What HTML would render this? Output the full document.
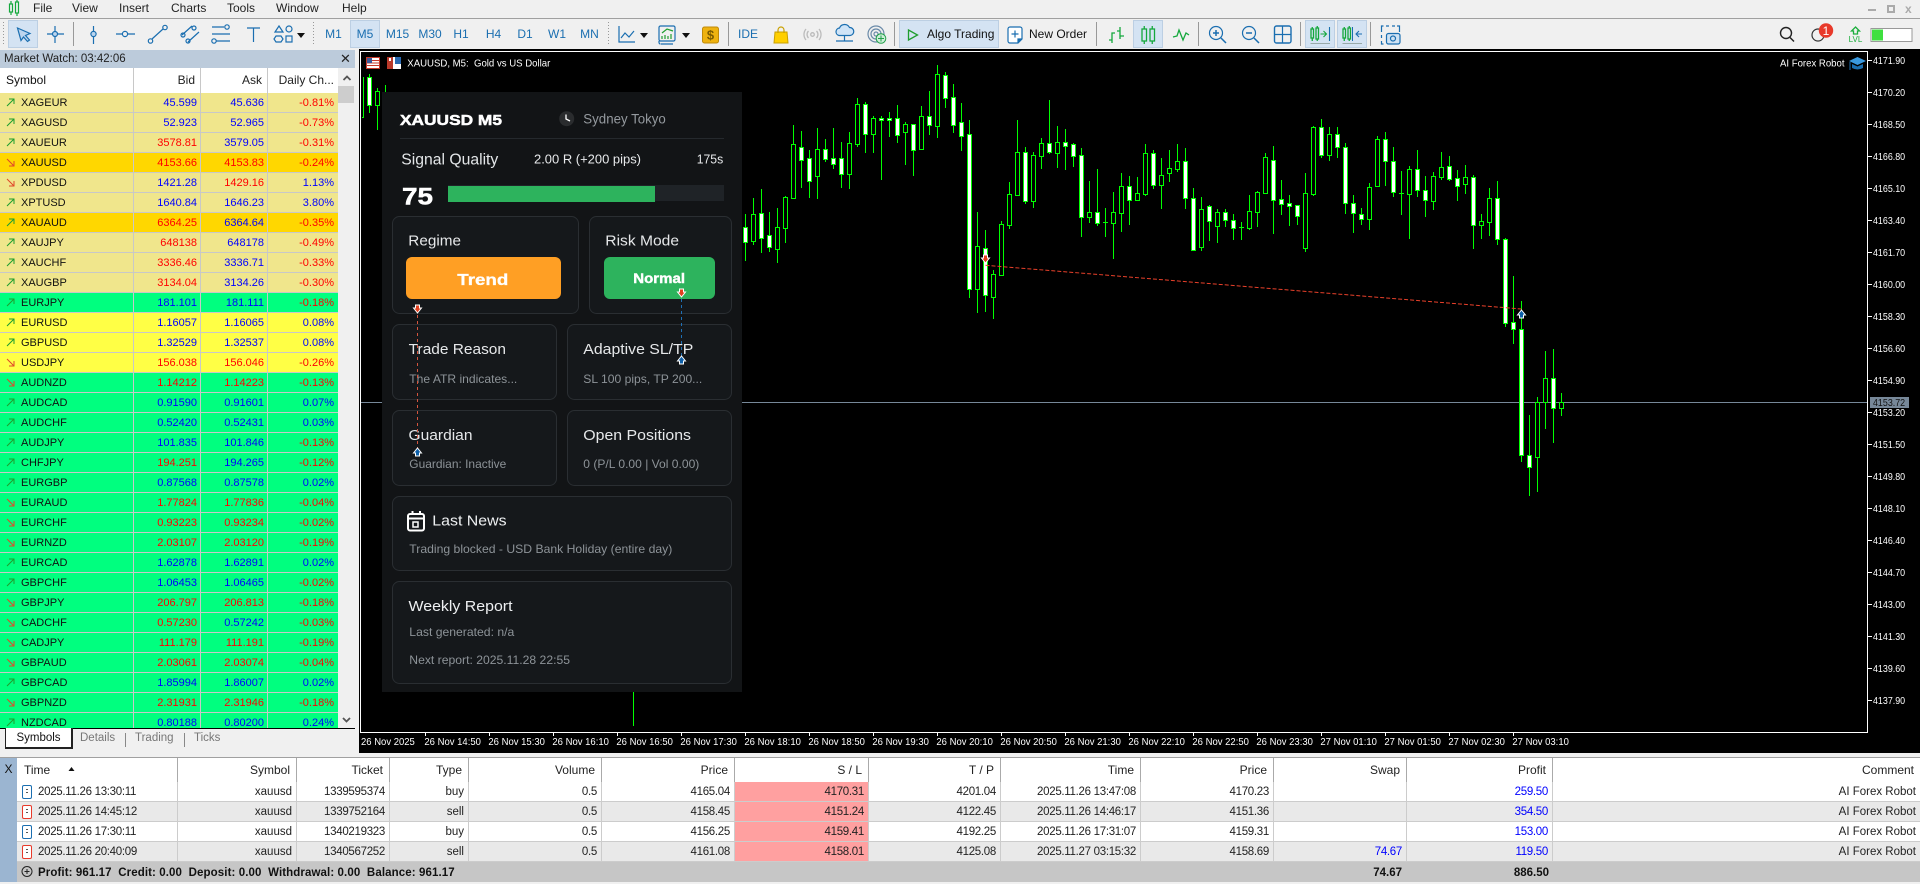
<!DOCTYPE html>
<html lang="en"><head><meta charset="utf-8"><title>MT5</title>
<style>
html,body{margin:0;padding:0;background:#f0f0f0;width:1920px;height:882px;overflow:hidden;font-family:"Liberation Sans",sans-serif;color:#222}
#main{position:absolute;left:0;top:0;z-index:3}
text{font-family:"Liberation Sans",sans-serif;white-space:pre}
.px,.tx{font-size:10px;fill:#fff;transform-box:fill-box;transform-origin:0 0}
.px{transform:scaleX(.89)}.tx{transform:scaleX(.95)}
.m{font-size:12px;fill:#222}.tf{font-size:12px;fill:#1a6eb0;text-anchor:middle}
.t1{font-size:15px;fill:#e6e8ea}.t2{font-size:12px;fill:#8d9398}
#mw{position:absolute;left:0;top:50px;width:355px;height:678px;background:#f0f0f0;overflow:hidden}
#mwt{height:18px;line-height:18px;background:#bccbdb;font-size:11.5px;padding-left:4px;position:relative}
#mwt b{position:absolute;left:340px;top:0;font-weight:normal;font-size:13px}
#mwh{display:flex;height:25px;background:#fff;width:338px;line-height:25px;font-size:12px}
#mwh div{box-sizing:border-box;border-right:1px solid #c8c8c8;text-align:right;padding-right:5px}
.r{display:flex;box-sizing:border-box;height:20px;width:338px;border-bottom:1px solid #c8c8c8;line-height:21px;font-size:11px}
.r div{box-sizing:border-box;border-right:1px solid #c8c8c8;text-align:right;padding-right:3px}
.r div.s,#mwh div.s{width:134px;text-align:left;padding-left:6px;color:#111;white-space:nowrap}
.r svg{vertical-align:-1px;margin-right:6px}
.w2{width:67px}.w4{width:70px;border-right:0!important;padding-right:4px!important}
.g{background:#f0e68c}.o{background:#ffd700}.f{background:#00ff7f}.y{background:#ffff45}
.b{color:#0000ff}.d{color:#ff0000}
#sb{position:absolute;left:338px;top:18px;width:17px;height:660px;background:#f0f0f0}
#sb i{position:absolute;left:0;top:18px;width:16px;height:17px;background:#cdcdcd}
#tabs{position:absolute;left:0;top:728px;width:355px;height:25px;border-top:1px solid #000;font-size:11.5px;box-sizing:border-box}
#tabs span{position:absolute;top:3px;color:#777}
#tabs .on{left:5px;top:-1px;width:65px;height:19px;background:#fff;border:1px solid #222;border-top:0;border-bottom-width:2px;border-right-width:2px;color:#111;line-height:20px;text-align:center;box-sizing:content-box}
#tabs u{position:absolute;top:4px;width:1px;height:14px;background:#888}
#tb{position:absolute;left:0;top:757px;width:1920px;height:125px;border-top:1px solid #a0a0a0;box-sizing:border-box;background:#fff}
#strip{position:absolute;left:0;top:0;width:17px;height:124px;background:#9bb5d1;color:#111;font-size:12px;text-align:center;line-height:22px}
.row{position:absolute;left:17px;right:0;display:flex;box-sizing:border-box;height:20px;font-size:11.5px;line-height:21px;border-bottom:1px solid #ccc}
.row div{box-sizing:border-box;border-right:1px solid #ccc;text-align:right;padding-right:4px;white-space:nowrap;overflow:hidden;letter-spacing:-.3px}
.row .a1,.row .a3,.row .a12{letter-spacing:0}
.row.h{top:0;height:24px;line-height:25px;border-bottom:0;font-size:12px}
.row.h div{border-right-color:#aaa;padding-right:6px;letter-spacing:0}
.a0{width:161px;text-align:left!important;padding-left:21px}.a1{width:119px}.a2{width:93px}.a3{width:79px}.a4{width:133px}.a5{width:133px}.a6{width:134px}.a7{width:132px}.a8{width:140px}.a9{width:133px}.a10{width:133px}.a11{width:146px}.a12{width:367px;border-right:0!important}
.alt{background:#e9e9e9}.sl{background:#ffa0a0}
.h .a0{padding-left:7px}
.i{position:absolute;left:5px;top:3px;width:8px;height:12px;border:1.5px solid #1a6eb0;border-radius:2px;background:#fff}
.i.x{border-color:#e8392a}
.i:before{content:"";position:absolute;left:3px;top:3px;width:2px;height:1px;background:#555;box-shadow:0 3px 0 #555}
#sum{position:absolute;left:17px;right:0;top:104px;height:20px;background:#c6c6c6;font-size:11.5px;font-weight:bold;line-height:22px;color:#111;white-space:nowrap}
#sum span{position:absolute}
</style></head><body>

<svg id="main" width="1920" height="882" viewBox="0 0 1920 882" style="pointer-events:none">
<defs>
<symbol id="up" viewBox="0 0 9 9"><path d="M1 8L8 1M3 1H8V6" fill="none" stroke="#1f9e2e"/></symbol>
<symbol id="dn" viewBox="0 0 9 9"><path d="M1 1L8 8M8 3V8H3" fill="none" stroke="#e0472a"/></symbol>
</defs>
<!-- top chrome -->
<rect x="0" y="18" width="1920" height="1" fill="#a0a0a0"/>
<g fill="none" stroke="#14a83c" stroke-width="1.2"><rect x="9.5" y="4" width="3" height="8"/><rect x="15.5" y="2" width="3" height="11"/><path d="M11 1V4M11 12V15M17 0V2M17 13V16"/></g>
<text class="m" x="33" y="12">File</text><text class="m" x="72" y="12">View</text><text class="m" x="119" y="12">Insert</text><text class="m" x="171" y="12">Charts</text><text class="m" x="227" y="12">Tools</text><text class="m" x="276" y="12">Window</text><text class="m" x="342" y="12">Help</text>
<g fill="#aaa"><rect x="1868" y="9" width="8" height="2"/><path d="M1887 5h8v8h-8zM1889 7v4h4v-4z" fill-rule="evenodd"/><text x="1905" y="13" font-size="12" font-weight="bold" fill="#aaa">x</text></g>
<!-- toolbar boxes -->
<g fill="#d4e3f3" stroke="#bccfe3"><rect x="8.5" y="20.5" width="29" height="27"/><rect x="350.5" y="20.5" width="29" height="27"/><rect x="899.5" y="20.5" width="99" height="27"/><rect x="1133.5" y="20.5" width="29" height="27"/><rect x="1305.5" y="20.5" width="29" height="27"/><rect x="1337.5" y="20.5" width="29" height="27"/></g>
<g stroke="#999" fill="none"><path d="M73.5 22V46M728.5 22V46M894.5 22V46M1096.5 22V46M1198.5 22V46M1300.5 22V46M1370.5 22V46"/><path d="M3.5 22V46M313.5 22V46M608.5 22V46" stroke-dasharray="1 2"/></g>
<!-- drawing tools -->
<g fill="none" stroke="#1a6eb0" stroke-width="1.2">
<path d="M17.5 28L30 33.5L25.5 35.5L29.5 40L27.5 41.5L23.5 37L21 40.5Z" fill="#bcd5ee"/>
<path d="M47 34H52.5M57.5 34H64M55 26V31.5M55 36.5V43"/><circle cx="55" cy="34" r="2.5" fill="#bcd5ee"/>
<path d="M93.5 26V31M93.5 37V44"/><circle cx="93.5" cy="34" r="2.6" fill="#bcd5ee"/>
<path d="M116 34H122.5M127.5 34H135"/><circle cx="125" cy="34" r="2.6"/>
<path d="M152 39L163 29"/><circle cx="150.5" cy="41" r="2.2"/><circle cx="165" cy="27.5" r="2.2"/>
<path d="M182 35L192 26M188 42L199 32"/><circle cx="183" cy="35" r="2"/><circle cx="194" cy="28" r="2"/><circle cx="188" cy="41" r="2"/>
<path d="M212 27H224M212 34H230M216 41H230"/><circle cx="227" cy="27" r="2.2"/><circle cx="214" cy="41" r="2.2"/>
<path d="M247 28H260M253.5 28V42"/>
<path d="M279 26L283 32H275Z"/><circle cx="289" cy="29" r="3"/><path d="M276 37h5l2 3l-2 3h-5l-2-3z" transform="translate(0 -1)"/><rect x="286" y="36" width="6" height="6"/>
</g>
<path d="M297 33h8l-4 5zM640 33h8l-4 5zM682 33h8l-4 5z" fill="#111"/>
<g class="tfg"><text class="tf" x="333.5" y="38">M1</text><text class="tf" x="365" y="38">M5</text><text class="tf" x="397.5" y="38">M15</text><text class="tf" x="430" y="38">M30</text><text class="tf" x="461" y="38">H1</text><text class="tf" x="493.5" y="38">H4</text><text class="tf" x="525" y="38">D1</text><text class="tf" x="557" y="38">W1</text><text class="tf" x="589.5" y="38">MN</text><text class="tf" x="748" y="38">IDE</text></g>
<g fill="none" stroke="#1a6eb0" stroke-width="1.2">
<path d="M619 26V42H635"/><path d="M621 38L625 33L629 37L634 31"/>
<rect x="659" y="26" width="16" height="15" rx="1.5"/><path d="M661 44H673M659 41V42.5A1.5 1.5 0 0 0 660.5 44"/><path d="M662 33L667 29L673 31" stroke="#1f9e2e"/><path d="M662 39V36M665 39V35M668 39V36M671 39V34" stroke="#1f9e2e"/>
<path d="M839 35.500a3.800 3.800 0 0 1 .5-7.500a5.500 5.500 0 0 1 10-.5a4 4 0 0 1 .5 8z" fill="#cfe4f7"/><path d="M844.500 35.500V40.500M836 41H853"/>
<circle cx="876" cy="34" r="8" stroke="#6a8aa8"/><circle cx="876" cy="34" r="5" stroke="#6a8aa8"/><circle cx="876" cy="34" r="2" stroke="#6a8aa8"/>
<path d="M1010 27h10a2 2 0 0 1 2 2v10l-4 4h-8a2 2 0 0 1-2-2v-12a2 2 0 0 1 2-2z" fill="#fff"/><path d="M1011.500 34h7M1015 30.500v7"/><path d="M1018 43v-4h4" fill="#1a6eb0"/>
<circle cx="1216" cy="33" r="6.500"/><path d="M1213 33h6M1216 30v6M1221 38L1226 43" stroke-width="1.500"/>
<circle cx="1249" cy="33" r="6.500"/><path d="M1246 33h6M1254 38L1259 43" stroke-width="1.500"/>
<rect x="1274.500" y="26" width="16.500" height="17" rx="2" stroke-width="1.400"/><path d="M1274.500 34.500H1291M1282.500 26V43"/>
<path d="M1381.500 32V26h2M1386 26h3M1392 26h3M1397 26h2.500v6M1381.500 35v3M1381.500 41v3h2" stroke-dasharray="none"/><rect x="1386.500" y="33.500" width="13.500" height="10.500" rx="2" fill="#cfe2f3"/><circle cx="1393" cy="38.500" r="2.500"/>
</g>
<rect x="702.500" y="27" width="16" height="16" rx="2" fill="#eeb20f" stroke="#c08a08"/><text x="710.500" y="39.500" text-anchor="middle" font-size="13" font-weight="bold" fill="#7a5a00">$</text>
<path d="M775 32H787L788 43H774Z" fill="#ffcf00" stroke="#c9a000"/><path d="M778 33V30a3 3 0 0 1 6 0V33" fill="none" stroke="#c9a000" stroke-width="1.200"/>
<g fill="none" stroke="#bbb" stroke-width="1.300"><circle cx="812.500" cy="34.500" r="1.800"/><path d="M808.500 31a5 5 0 0 0 0 7M816.500 31a5 5 0 0 1 0 7M806 29a8.500 8.500 0 0 0 0 11M819 29a8.500 8.500 0 0 1 0 11"/></g>
<circle cx="881" cy="38.500" r="4.800" fill="#cdeed8" stroke="#22a04a"/><path d="M878 38.500h6M881 35.500v6" stroke="#22a04a"/>
<path d="M908.500 30V40L917.500 35Z" fill="none" stroke="#1f9e2e" stroke-width="1.300"/>
<text x="927" y="38" font-size="12" fill="#111">Algo Trading</text>
<text x="1029" y="38" font-size="12" fill="#111">New Order</text>
<g fill="none" stroke="#14a83c" stroke-width="1.300">
<path d="M1112 43V33H1115M1112 40H1109M1120 27V39M1120 36H1124M1120 31H1117"/>
<rect x="1142" y="29" width="4.500" height="12"/><rect x="1150" y="29" width="4.500" height="12"/><path d="M1144.250 26V29M1144.250 41V44M1152.250 26V29M1152.250 41V44"/>
<path d="M1173 37L1177 36L1179 30L1183 40L1186 33L1189 35"/>
<rect x="1311" y="29" width="2.500" height="9"/><rect x="1316" y="28" width="2.500" height="11"/><path d="M1312.250 27V29M1312.250 38V41M1317.250 26V28M1317.250 39V41"/>
<rect x="1343" y="29" width="2.500" height="9"/><rect x="1348" y="28" width="2.500" height="11"/><path d="M1344.250 27V29M1344.250 38V41M1349.250 26V28M1349.250 39V41"/>
</g>
<path d="M1320.500 34H1326M1323.500 31L1326.500 34L1323.500 37M1329.500 27V41" fill="none" stroke="#14a83c" stroke-width="1.100"/><path d="M1329.500 27V41" stroke="#1a6eb0"/>
<path d="M1352.500 27V41" stroke="#1a6eb0"/><path d="M1362 34H1356M1359 31L1356 34L1359 37" fill="none" stroke="#1a6eb0" stroke-width="1.100"/>
<path d="M1310.500 43.500H1330M1342.500 43.500H1362" stroke="#9aa" stroke-width="1"/>
<!-- right icons -->
<circle cx="1786" cy="33" r="5.500" fill="none" stroke="#222" stroke-width="1.400"/><path d="M1790 37.500L1794 41.500" stroke="#222" stroke-width="1.500"/>
<circle cx="1818" cy="35" r="6" fill="none" stroke="#333" stroke-width="1.200"/><circle cx="1826" cy="30.500" r="7.200" fill="#e8392a"/><text x="1826" y="35" text-anchor="middle" font-size="12" fill="#fff">1</text>
<path d="M1855.500 27L1859.500 31H1857.500V34H1853.500V31H1851.500Z" fill="none" stroke="#1cae3c" stroke-width="1.300"/><text x="1855.500" y="42" text-anchor="middle" font-size="8" fill="#1cae3c">LVL</text>
<rect x="1871" y="28.500" width="41" height="13" fill="#fff" stroke="#999"/><rect x="1872" y="29.500" width="11" height="11" fill="#3fe03f"/>

<!-- chart -->
<rect x="359" y="49" width="1561" height="704" fill="#000"/>
<rect x="360.500" y="51.500" width="1507" height="681" fill="#000" stroke="#fff"/>
<path d="M361 402.500H1867" stroke="#778899"/>
<g stroke="#00ff00" fill="none" shape-rendering="crispEdges">
<path d="M362 117.500h1.500V77M369.500 74V113M377.500 88V130M385.500 85V92M633.500 692V726M745.500 214V261M753.500 198V245M761.500 189V253M769.500 212V252M777.500 208V263M785.500 196V243M793.500 125V198M801.500 131V188M809.500 150V198M817.500 128V199M825.500 139V162M833.500 128V169M841.500 142V188M849.500 132V189M857.500 98V147M865.500 102V153M873.500 116V153M881.500 116V180M889.500 112V137M897.500 105V143M905.500 122V165M913.500 124V176M921.500 106V150M929.500 91V135M937.500 65V138M945.500 72V108M953.500 84V133M961.500 103V151M969.500 120V298M977.500 212V313M985.500 230V312M993.500 270V319M1001.500 221V275M1009.500 182V229M1017.500 120V195M1025.500 147V204M1033.500 152V208M1041.500 138V169M1049.500 100V154M1057.500 126V168M1065.500 129V170M1073.500 143V167M1081.500 148V237M1089.500 181V223M1097.500 169V226M1105.500 208V237M1113.500 192V259M1121.500 173V232M1129.500 176V225M1137.500 177V201M1145.500 144V196M1153.500 150V189M1161.500 158V209M1169.500 150V182M1177.500 144V172M1185.500 148V209M1193.500 188V250M1201.500 197V251M1209.500 205V241M1217.500 209V243M1225.500 209V227M1233.500 214V240M1241.500 222V240M1249.500 195V230M1257.500 191V227M1265.500 153V193M1273.500 146V234M1281.500 180V215M1289.500 195V226M1297.500 205V225M1305.500 173V252M1313.500 126V196M1321.500 119V158M1329.500 127V161M1337.500 127V158M1345.500 143V214M1353.500 195V233M1361.500 208V225M1369.500 183V230M1377.500 136V187M1385.500 132V186M1393.500 147V197M1401.500 171V215M1409.500 166V239M1417.500 150V197M1425.500 176V217M1433.500 172V210M1441.500 152V180M1449.500 156V181M1457.500 170V201M1465.500 165V194M1473.500 175V249M1481.500 214V239M1489.500 188V236M1497.500 181V245M1505.500 238V327M1513.500 276V344M1521.500 301V462M1529.500 415V496M1537.500 397V492M1545.500 351V429M1553.500 349V443M1561.500 393V416M1103 222.500h5M1239 227.500h5M1399 193.500h5"/>
<path fill="#000" d="M375.500 91.500h4v14h-4zM751.500 214.500h4v27h-4zM775.500 227.500h4v22h-4zM783.500 197.500h4v31h-4zM791.500 144.500h4v54h-4zM815.500 149.500h4v27h-4zM847.500 143.500h4v31h-4zM855.500 104.500h4v40h-4zM871.500 118.500h4v16h-4zM903.500 124.500h4v8h-4zM919.500 116.500h4v33h-4zM935.500 74.500h4v52h-4zM975.500 246.500h4v43h-4zM991.500 274.500h4v23h-4zM999.500 224.500h4v51h-4zM1007.500 194.500h4v31h-4zM1015.500 152.500h4v43h-4zM1031.500 155.500h4v46h-4zM1039.500 143.500h4v13h-4zM1055.500 142.500h4v11h-4zM1087.500 212.500h4v5h-4zM1111.500 212.500h4v11h-4zM1119.500 186.500h4v27h-4zM1135.500 193.500h4v7h-4zM1143.500 153.500h4v41h-4zM1159.500 175.500h4v10h-4zM1167.500 168.500h4v5h-4zM1175.500 161.500h4v8h-4zM1199.500 209.500h4v38h-4zM1215.500 212.500h4v14h-4zM1247.500 211.500h4v17h-4zM1255.500 192.500h4v20h-4zM1263.500 157.500h4v36h-4zM1303.500 193.500h4v55h-4zM1311.500 127.500h4v67h-4zM1327.500 134.500h4v21h-4zM1367.500 187.500h4v32h-4zM1375.500 139.500h4v47h-4zM1407.500 169.500h4v25h-4zM1431.500 176.500h4v25h-4zM1439.500 167.500h4v10h-4zM1463.500 177.500h4v7h-4zM1479.500 221.500h4v4h-4zM1487.500 198.500h4v24h-4zM1535.500 402.500h4v55h-4zM1543.500 378.500h4v24h-4zM1559.500 402.500h4v6h-4z"/>
<path fill="#fff" d="M367.500 77.500h4v28h-4zM743.500 227.500h4v15h-4zM759.500 213.500h4v25h-4zM767.500 235.500h4v12h-4zM799.500 147.500h4v13h-4zM807.500 158.500h4v23h-4zM823.500 149.500h4v10h-4zM831.500 158.500h4v6h-4zM839.500 158.500h4v16h-4zM863.500 104.500h4v30h-4zM879.500 118.500h4v2h-4zM887.500 118.500h4v2h-4zM895.500 118.500h4v17h-4zM911.500 124.500h4v26h-4zM927.500 116.500h4v9h-4zM943.500 75.500h4v23h-4zM951.500 97.500h4v28h-4zM959.500 122.500h4v14h-4zM967.500 134.500h4v155h-4zM983.500 248.500h4v47h-4zM1023.500 152.500h4v49h-4zM1047.500 143.500h4v9h-4zM1063.500 142.500h4v4h-4zM1071.500 144.500h4v12h-4zM1079.500 155.500h4v62h-4zM1095.500 212.500h4v11h-4zM1127.500 186.500h4v14h-4zM1151.500 153.500h4v32h-4zM1183.500 161.500h4v37h-4zM1191.500 198.500h4v52h-4zM1207.500 206.500h4v15h-4zM1223.500 212.500h4v8h-4zM1231.500 220.500h4v8h-4zM1271.500 160.500h4v40h-4zM1279.500 199.500h4v5h-4zM1287.500 203.500h4v3h-4zM1295.500 205.500h4v11h-4zM1319.500 127.500h4v28h-4zM1335.500 134.500h4v13h-4zM1343.500 147.500h4v56h-4zM1351.500 203.500h4v10h-4zM1359.500 214.500h4v5h-4zM1383.500 139.500h4v22h-4zM1391.500 161.500h4v31h-4zM1415.500 169.500h4v21h-4zM1423.500 190.500h4v10h-4zM1447.500 166.500h4v13h-4zM1455.500 178.500h4v8h-4zM1471.500 177.500h4v48h-4zM1495.500 198.500h4v41h-4zM1503.500 239.500h4v84h-4zM1511.500 322.500h4v7h-4zM1519.500 329.500h4v126h-4zM1527.500 455.500h4v12h-4zM1551.500 378.500h4v30h-4z"/>
</g>
<!-- chart trend line -->
<path d="M985.500 265.300L1521.500 309" stroke="#e8402a" stroke-dasharray="4 2"/>
<!-- price axis -->
<g fill="#fff"><path d="M1868 60.500h4M1868 92.500h4M1868 124.500h4M1868 156.500h4M1868 188.500h4M1868 220.500h4M1868 252.500h4M1868 284.500h4M1868 316.500h4M1868 348.500h4M1868 380.500h4M1868 412.500h4M1868 444.500h4M1868 476.500h4M1868 508.500h4M1868 540.500h4M1868 572.500h4M1868 604.500h4M1868 636.500h4M1868 668.500h4M1868 700.500h4" stroke="#fff"/>
<text class="px" x="1873" y="64">4171.90</text><text class="px" x="1873" y="96">4170.20</text><text class="px" x="1873" y="128">4168.50</text><text class="px" x="1873" y="160">4166.80</text><text class="px" x="1873" y="192">4165.10</text><text class="px" x="1873" y="224">4163.40</text><text class="px" x="1873" y="256">4161.70</text><text class="px" x="1873" y="288">4160.00</text><text class="px" x="1873" y="320">4158.30</text><text class="px" x="1873" y="352">4156.60</text><text class="px" x="1873" y="384">4154.90</text><text class="px" x="1873" y="416">4153.20</text><text class="px" x="1873" y="448">4151.50</text><text class="px" x="1873" y="480">4149.80</text><text class="px" x="1873" y="512">4148.10</text><text class="px" x="1873" y="544">4146.40</text><text class="px" x="1873" y="576">4144.70</text><text class="px" x="1873" y="608">4143.00</text><text class="px" x="1873" y="640">4141.30</text><text class="px" x="1873" y="672">4139.60</text><text class="px" x="1873" y="704">4137.90</text></g>
<rect x="1870" y="397" width="39" height="11" fill="#778899"/><text class="px" x="1873" y="406" style="fill:#111">4153.72</text>
<!-- time axis -->
<path d="M425.500 732v4M489.500 732v4M553.500 732v4M617.500 732v4M681.500 732v4M745.500 732v4M809.500 732v4M873.500 732v4M937.500 732v4M1001.500 732v4M1065.500 732v4M1129.500 732v4M1193.500 732v4M1257.500 732v4M1321.500 732v4M1385.500 732v4M1449.500 732v4M1513.500 732v4" stroke="#fff"/>
<text class="tx" x="361" y="745">26 Nov 2025</text><text class="tx" x="424.400" y="745">26 Nov 14:50</text><text class="tx" x="488.400" y="745">26 Nov 15:30</text><text class="tx" x="552.400" y="745">26 Nov 16:10</text><text class="tx" x="616.400" y="745">26 Nov 16:50</text><text class="tx" x="680.400" y="745">26 Nov 17:30</text><text class="tx" x="744.400" y="745">26 Nov 18:10</text><text class="tx" x="808.400" y="745">26 Nov 18:50</text><text class="tx" x="872.400" y="745">26 Nov 19:30</text><text class="tx" x="936.400" y="745">26 Nov 20:10</text><text class="tx" x="1000.400" y="745">26 Nov 20:50</text><text class="tx" x="1064.400" y="745">26 Nov 21:30</text><text class="tx" x="1128.400" y="745">26 Nov 22:10</text><text class="tx" x="1192.400" y="745">26 Nov 22:50</text><text class="tx" x="1256.400" y="745">26 Nov 23:30</text><text class="tx" x="1320.400" y="745">27 Nov 01:10</text><text class="tx" x="1384.400" y="745">27 Nov 01:50</text><text class="tx" x="1448.400" y="745">27 Nov 02:30</text><text class="tx" x="1512.400" y="745">27 Nov 03:10</text>
<!-- chart labels -->
<g><rect x="366.500" y="57.500" width="13" height="11" fill="#fff" stroke="#c8392a"/><path d="M367 60.500h12M367 63h12M367 65.500h12" stroke="#c8392a"/><rect x="367" y="58" width="5" height="5" fill="#3a5a9a"/>
<rect x="387" y="57" width="14" height="12" fill="#fff"/><path d="M387 57h6v12h-6z" fill="#b8392a"/><path d="M395 57h6v7h-6z" fill="#2a6ab0"/><rect x="389" y="58" width="2" height="3" fill="#fff"/></g>
<text x="407.300" y="66.500" font-size="10.500" fill="#fff" textLength="143" lengthAdjust="spacingAndGlyphs">XAUUSD, M5:  Gold vs US Dollar</text>
<text x="1780" y="66.500" font-size="10.500" fill="#fff" textLength="64.500" lengthAdjust="spacingAndGlyphs">AI Forex Robot</text>
<path d="M1849 61L1857.500 57L1866 61L1857.500 65Z" fill="#3a9ae0"/><path d="M1852 64V68Q1857.500 71 1863 68V64L1857.500 66.500Z" fill="#1a6eb0"/><path d="M1850 62V70" stroke="#1a6eb0"/>

<!-- dashboard panel -->
<rect x="382" y="92" width="360" height="600" fill="#121416"/>
<g fill="#15181b" stroke="#2a2e32">
<rect x="392.500" y="216.500" width="186" height="97" rx="7"/><rect x="589.500" y="216.500" width="142" height="97" rx="7"/>
<rect x="392.500" y="324.500" width="164" height="75" rx="7"/><rect x="567.500" y="324.500" width="164" height="75" rx="7"/>
<rect x="392.500" y="410.500" width="164" height="75" rx="7"/><rect x="567.500" y="410.500" width="164" height="75" rx="7"/>
<rect x="392.500" y="496.500" width="339" height="74" rx="7"/><rect x="392.500" y="581.500" width="339" height="102" rx="7"/>
</g>
<path d="M400 138.500H724" stroke="#25292d"/>
<text x="400" y="125" font-size="15" font-weight="bold" fill="#fff" stroke="#fff" stroke-width=".5" textLength="102" lengthAdjust="spacingAndGlyphs">XAUUSD M5</text>
<circle cx="566.700" cy="118.700" r="7.500" fill="#2a2c2e"/><path d="M566 114.500V119L570 121" fill="none" stroke="#fff" stroke-width="1.300"/>
<text x="583.300" y="123.500" font-size="14" fill="#94999e" textLength="82.500" lengthAdjust="spacingAndGlyphs">Sydney Tokyo</text>
<text x="401.300" y="164.500" font-size="15.500" fill="#e3e6e8" textLength="97" lengthAdjust="spacingAndGlyphs">Signal Quality</text>
<text x="534" y="163.500" font-size="13" fill="#e8eaec" textLength="107" lengthAdjust="spacingAndGlyphs">2.00 R (+200 pips)</text>
<text x="696.700" y="163.500" font-size="13" fill="#e8eaec" textLength="26.500" lengthAdjust="spacingAndGlyphs">175s</text>
<text x="402" y="204.500" font-size="24" font-weight="bold" fill="#fff" stroke="#fff" stroke-width=".5" textLength="31" lengthAdjust="spacingAndGlyphs">75</text>
<rect x="448" y="185" width="276" height="16" fill="#1f2327"/><rect x="448" y="186" width="207" height="16" fill="#2db35d"/>
<text class="t1" x="408.300" y="245.500" textLength="52.700" lengthAdjust="spacingAndGlyphs">Regime</text>
<text class="t1" x="605.300" y="245.500" textLength="73.700" lengthAdjust="spacingAndGlyphs">Risk Mode</text>
<rect x="406" y="257" width="155" height="42" rx="6" fill="#ff9f24"/><rect x="604" y="257" width="111" height="42" rx="6" fill="#2db35d"/>
<text x="457.300" y="285" font-size="16" font-weight="bold" fill="#fff" stroke="#fff" stroke-width=".3" textLength="51" lengthAdjust="spacingAndGlyphs">Trend</text>
<text x="633.300" y="283" font-size="13.500" font-weight="bold" fill="#fff" stroke="#fff" stroke-width=".4" textLength="51.700" lengthAdjust="spacingAndGlyphs">Normal</text>
<text class="t1" x="408.700" y="354" textLength="97.300" lengthAdjust="spacingAndGlyphs">Trade Reason</text>
<text class="t1" x="583.300" y="354" textLength="110" lengthAdjust="spacingAndGlyphs">Adaptive SL/TP</text>
<text class="t2" x="409.300" y="383" textLength="108" lengthAdjust="spacingAndGlyphs">The ATR indicates...</text>
<text class="t2" x="583.300" y="383" textLength="119" lengthAdjust="spacingAndGlyphs">SL 100 pips, TP 200...</text>
<text class="t1" x="408.500" y="440" textLength="64" lengthAdjust="spacingAndGlyphs">Guardian</text>
<text class="t1" x="583.300" y="440" textLength="107.700" lengthAdjust="spacingAndGlyphs">Open Positions</text>
<text class="t2" x="409.300" y="468" textLength="97" lengthAdjust="spacingAndGlyphs">Guardian: Inactive</text>
<text class="t2" x="583.300" y="468" textLength="116" lengthAdjust="spacingAndGlyphs">0 (P/L 0.00 | Vol 0.00)</text>
<g fill="none" stroke="#fff"><rect x="408" y="514" width="16" height="16.500" rx="2" stroke-width="2"/><path d="M408 518.500H424" stroke-width="2"/><path d="M412.500 511V514M420 511V514" stroke-width="2"/><rect x="413" y="522" width="5" height="5" stroke-width="1.500"/></g>
<text class="t1" x="432.300" y="525.700" style="fill:#eef0f2" textLength="74.300" lengthAdjust="spacingAndGlyphs">Last News</text>
<text class="t2" x="409.300" y="553" textLength="263" lengthAdjust="spacingAndGlyphs">Trading blocked - USD Bank Holiday (entire day)</text>
<text class="t1" x="408.500" y="611" style="fill:#eef0f2" textLength="104" lengthAdjust="spacingAndGlyphs">Weekly Report</text>
<text class="t2" x="409.300" y="636" textLength="105" lengthAdjust="spacingAndGlyphs">Last generated: n/a</text>
<text class="t2" x="409.300" y="664" textLength="160.700" lengthAdjust="spacingAndGlyphs">Next report: 2025.11.28 22:55</text>
<!-- trade arrows above panel -->
<path d="M417.500 309V452" stroke="#d4553f" stroke-dasharray="3 3"/>
<path d="M681.500 293V360" stroke="#1e6fb5" stroke-dasharray="3 3"/>
<g stroke="#fff" stroke-width="1"><path d="M413.500 308H415.500V305H419.500V308H421.500L417.500 313Z" fill="#e2401f"/><path d="M677.500 292H679.500V289H683.500V292H685.500L681.500 297Z" fill="#e2401f"/><path d="M981.500 258H983.500V255H987.500V258H989.500L985.500 263Z" fill="#e2401f"/>
<path d="M413.500 453H415.500V456H419.500V453H421.500L417.500 448Z" fill="#0d5fa8"/><path d="M677.500 361H679.500V364H683.500V361H685.500L681.500 356Z" fill="#0d5fa8"/><path d="M1517.500 315H1519.500V318H1523.500V315H1525.500L1521.500 310Z" fill="#0d5fa8"/></g>
<!-- scrollbar arrows -->
<path d="M343.500 80L347 76.500L350.500 80M343 718L346.500 721.500L350 718" fill="none" stroke="#555" stroke-width="1.800"/>
<circle cx="27" cy="871.500" r="5" fill="none" stroke="#222"/><path d="M24.500 871.500h5M27 869v5" stroke="#222"/>
<path d="M68.500 771L71.500 767L74.500 771Z" fill="#111"/>
</svg>

<!-- Market Watch -->
<div id="mw">
<div id="mwt">Market Watch: 03:42:06<b>✕</b></div>
<div id="mwh"><div class="s">Symbol</div><div class="w2">Bid</div><div class="w2">Ask</div><div class="w4">Daily Ch...</div></div>
<div class="r g"><div class="s"><svg width="9" height="9"><use href="#up"/></svg>XAGEUR</div><div class="w2 b">45.599</div><div class="w2 b">45.636</div><div class="w4 d">-0.81%</div></div>
<div class="r g"><div class="s"><svg width="9" height="9"><use href="#up"/></svg>XAGUSD</div><div class="w2 b">52.923</div><div class="w2 b">52.965</div><div class="w4 d">-0.73%</div></div>
<div class="r g"><div class="s"><svg width="9" height="9"><use href="#up"/></svg>XAUEUR</div><div class="w2 d">3578.81</div><div class="w2 b">3579.05</div><div class="w4 d">-0.31%</div></div>
<div class="r o"><div class="s"><svg width="9" height="9"><use href="#dn"/></svg>XAUUSD</div><div class="w2 d">4153.66</div><div class="w2 d">4153.83</div><div class="w4 d">-0.24%</div></div>
<div class="r g"><div class="s"><svg width="9" height="9"><use href="#dn"/></svg>XPDUSD</div><div class="w2 b">1421.28</div><div class="w2 d">1429.16</div><div class="w4 b">1.13%</div></div>
<div class="r g"><div class="s"><svg width="9" height="9"><use href="#up"/></svg>XPTUSD</div><div class="w2 b">1640.84</div><div class="w2 b">1646.23</div><div class="w4 b">3.80%</div></div>
<div class="r o"><div class="s"><svg width="9" height="9"><use href="#up"/></svg>XAUAUD</div><div class="w2 d">6364.25</div><div class="w2 b">6364.64</div><div class="w4 d">-0.35%</div></div>
<div class="r g"><div class="s"><svg width="9" height="9"><use href="#up"/></svg>XAUJPY</div><div class="w2 d">648138</div><div class="w2 b">648178</div><div class="w4 d">-0.49%</div></div>
<div class="r g"><div class="s"><svg width="9" height="9"><use href="#up"/></svg>XAUCHF</div><div class="w2 d">3336.46</div><div class="w2 b">3336.71</div><div class="w4 d">-0.33%</div></div>
<div class="r g"><div class="s"><svg width="9" height="9"><use href="#up"/></svg>XAUGBP</div><div class="w2 d">3134.04</div><div class="w2 b">3134.26</div><div class="w4 d">-0.30%</div></div>
<div class="r f"><div class="s"><svg width="9" height="9"><use href="#up"/></svg>EURJPY</div><div class="w2 b">181.101</div><div class="w2 b">181.111</div><div class="w4 d">-0.18%</div></div>
<div class="r y"><div class="s"><svg width="9" height="9"><use href="#up"/></svg>EURUSD</div><div class="w2 b">1.16057</div><div class="w2 b">1.16065</div><div class="w4 b">0.08%</div></div>
<div class="r y"><div class="s"><svg width="9" height="9"><use href="#up"/></svg>GBPUSD</div><div class="w2 b">1.32529</div><div class="w2 b">1.32537</div><div class="w4 b">0.08%</div></div>
<div class="r y"><div class="s"><svg width="9" height="9"><use href="#dn"/></svg>USDJPY</div><div class="w2 d">156.038</div><div class="w2 d">156.046</div><div class="w4 d">-0.26%</div></div>
<div class="r f"><div class="s"><svg width="9" height="9"><use href="#dn"/></svg>AUDNZD</div><div class="w2 d">1.14212</div><div class="w2 d">1.14223</div><div class="w4 d">-0.13%</div></div>
<div class="r f"><div class="s"><svg width="9" height="9"><use href="#up"/></svg>AUDCAD</div><div class="w2 b">0.91590</div><div class="w2 b">0.91601</div><div class="w4 b">0.07%</div></div>
<div class="r f"><div class="s"><svg width="9" height="9"><use href="#up"/></svg>AUDCHF</div><div class="w2 b">0.52420</div><div class="w2 b">0.52431</div><div class="w4 b">0.03%</div></div>
<div class="r f"><div class="s"><svg width="9" height="9"><use href="#up"/></svg>AUDJPY</div><div class="w2 b">101.835</div><div class="w2 b">101.846</div><div class="w4 d">-0.13%</div></div>
<div class="r f"><div class="s"><svg width="9" height="9"><use href="#up"/></svg>CHFJPY</div><div class="w2 d">194.251</div><div class="w2 b">194.265</div><div class="w4 d">-0.12%</div></div>
<div class="r f"><div class="s"><svg width="9" height="9"><use href="#up"/></svg>EURGBP</div><div class="w2 b">0.87568</div><div class="w2 b">0.87578</div><div class="w4 b">0.02%</div></div>
<div class="r f"><div class="s"><svg width="9" height="9"><use href="#dn"/></svg>EURAUD</div><div class="w2 d">1.77824</div><div class="w2 d">1.77836</div><div class="w4 d">-0.04%</div></div>
<div class="r f"><div class="s"><svg width="9" height="9"><use href="#dn"/></svg>EURCHF</div><div class="w2 d">0.93223</div><div class="w2 d">0.93234</div><div class="w4 d">-0.02%</div></div>
<div class="r f"><div class="s"><svg width="9" height="9"><use href="#dn"/></svg>EURNZD</div><div class="w2 d">2.03107</div><div class="w2 d">2.03120</div><div class="w4 d">-0.19%</div></div>
<div class="r f"><div class="s"><svg width="9" height="9"><use href="#up"/></svg>EURCAD</div><div class="w2 b">1.62878</div><div class="w2 b">1.62891</div><div class="w4 b">0.02%</div></div>
<div class="r f"><div class="s"><svg width="9" height="9"><use href="#up"/></svg>GBPCHF</div><div class="w2 b">1.06453</div><div class="w2 b">1.06465</div><div class="w4 d">-0.02%</div></div>
<div class="r f"><div class="s"><svg width="9" height="9"><use href="#dn"/></svg>GBPJPY</div><div class="w2 d">206.797</div><div class="w2 d">206.813</div><div class="w4 d">-0.18%</div></div>
<div class="r f"><div class="s"><svg width="9" height="9"><use href="#dn"/></svg>CADCHF</div><div class="w2 d">0.57230</div><div class="w2 b">0.57242</div><div class="w4 d">-0.03%</div></div>
<div class="r f"><div class="s"><svg width="9" height="9"><use href="#dn"/></svg>CADJPY</div><div class="w2 d">111.179</div><div class="w2 d">111.191</div><div class="w4 d">-0.19%</div></div>
<div class="r f"><div class="s"><svg width="9" height="9"><use href="#dn"/></svg>GBPAUD</div><div class="w2 d">2.03061</div><div class="w2 d">2.03074</div><div class="w4 d">-0.04%</div></div>
<div class="r f"><div class="s"><svg width="9" height="9"><use href="#up"/></svg>GBPCAD</div><div class="w2 b">1.85994</div><div class="w2 b">1.86007</div><div class="w4 b">0.02%</div></div>
<div class="r f"><div class="s"><svg width="9" height="9"><use href="#dn"/></svg>GBPNZD</div><div class="w2 d">2.31931</div><div class="w2 d">2.31946</div><div class="w4 d">-0.18%</div></div>
<div class="r f"><div class="s"><svg width="9" height="9"><use href="#up"/></svg>NZDCAD</div><div class="w2 b">0.80188</div><div class="w2 b">0.80200</div><div class="w4 b">0.24%</div></div>
<div id="sb"><i></i></div>
</div>
<div id="tabs"><span class="on">Symbols</span><span style="left:80px">Details</span><u style="left:125px"></u><span style="left:135px">Trading</span><u style="left:184px"></u><span style="left:194px">Ticks</span></div>

<!-- Toolbox -->
<div id="tb">
<div id="strip">X</div>
<div class="row h"><div class="a0">Time</div><div class="a1">Symbol</div><div class="a2">Ticket</div><div class="a3">Type</div><div class="a4">Volume</div><div class="a5">Price</div><div class="a6">S / L</div><div class="a7">T / P</div><div class="a8">Time</div><div class="a9">Price</div><div class="a10">Swap</div><div class="a11">Profit</div><div class="a12">Comment</div></div>
<div class="row" style="top:24px"><span class="i"></span><div class="a0">2025.11.26 13:30:11</div><div class="a1">xauusd</div><div class="a2">1339595374</div><div class="a3">buy</div><div class="a4">0.5</div><div class="a5">4165.04</div><div class="a6 sl">4170.31</div><div class="a7">4201.04</div><div class="a8">2025.11.26 13:47:08</div><div class="a9">4170.23</div><div class="a10"></div><div class="a11 b">259.50</div><div class="a12">AI Forex Robot</div></div>
<div class="row alt" style="top:44px"><span class="i x"></span><div class="a0">2025.11.26 14:45:12</div><div class="a1">xauusd</div><div class="a2">1339752164</div><div class="a3">sell</div><div class="a4">0.5</div><div class="a5">4158.45</div><div class="a6 sl">4151.24</div><div class="a7">4122.45</div><div class="a8">2025.11.26 14:46:17</div><div class="a9">4151.36</div><div class="a10"></div><div class="a11 b">354.50</div><div class="a12">AI Forex Robot</div></div>
<div class="row" style="top:64px"><span class="i"></span><div class="a0">2025.11.26 17:30:11</div><div class="a1">xauusd</div><div class="a2">1340219323</div><div class="a3">buy</div><div class="a4">0.5</div><div class="a5">4156.25</div><div class="a6 sl">4159.41</div><div class="a7">4192.25</div><div class="a8">2025.11.26 17:31:07</div><div class="a9">4159.31</div><div class="a10"></div><div class="a11 b">153.00</div><div class="a12">AI Forex Robot</div></div>
<div class="row alt" style="top:84px"><span class="i x"></span><div class="a0">2025.11.26 20:40:09</div><div class="a1">xauusd</div><div class="a2">1340567252</div><div class="a3">sell</div><div class="a4">0.5</div><div class="a5">4161.08</div><div class="a6 sl">4158.01</div><div class="a7">4125.08</div><div class="a8">2025.11.27 03:15:32</div><div class="a9">4158.69</div><div class="a10 b">74.67</div><div class="a11 b">119.50</div><div class="a12">AI Forex Robot</div></div>
<div id="sum"><span style="left:21px;letter-spacing:.1px">Profit: 961.17&nbsp; Credit: 0.00&nbsp; Deposit: 0.00&nbsp; Withdrawal: 0.00&nbsp; Balance: 961.17</span><span style="right:518px">74.67</span><span style="left:1490px;width:42px;text-align:right">886.50</span></div>
</div>
</body></html>
